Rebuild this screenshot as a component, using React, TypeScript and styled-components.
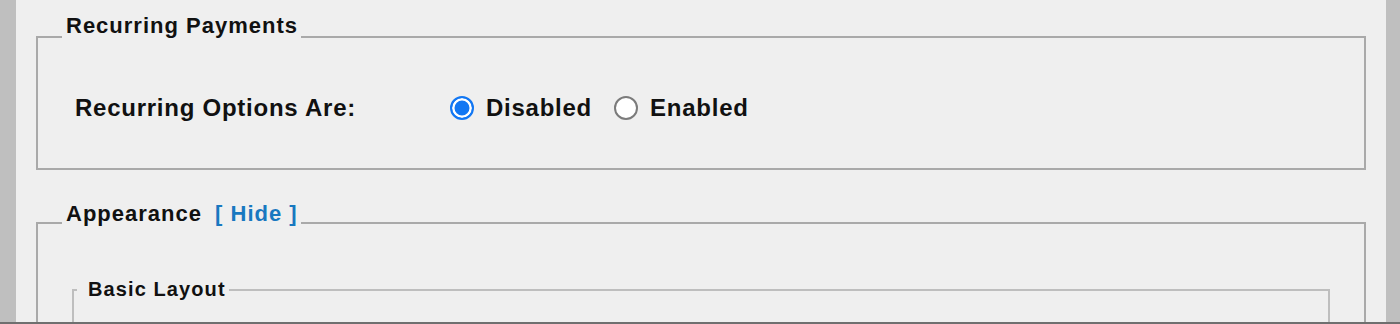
import React, { useState } from "react";
import styled, { createGlobalStyle } from "styled-components";

const GlobalStyle = createGlobalStyle`
  html, body { margin: 0; padding: 0; background: #efefef; }
  body { font-family: "Liberation Sans", Arial, Helvetica, sans-serif; color: #111; }
`;

const Frame = styled.div`
  display: flex;
  height: 324px;
  box-sizing: border-box;
  border-bottom: 2px solid #6f6f6f;
  overflow: hidden;
  background: #efefef;
`;

const Strip = styled.div<{ $w: number }>`
  flex: 0 0 ${(p) => p.$w}px;
  background: #bfbfbf;
`;

const Main = styled.main`
  flex: 1;
  min-width: 0;
  padding: 13px 20px 0;
  display: flex;
  flex-direction: column;
  gap: 31px;
`;

const Fieldset = styled.fieldset<{ $inner?: boolean }>`
  margin: ${(p) => (p.$inner ? "0 10px" : "0")};
  padding: 0 ${(p) => (p.$inner ? "3px" : "24px")};
  border: 2px solid ${(p) => (p.$inner ? "#bebebe" : "#a9a9a9")};
  min-width: 0;
`;

const Legend = styled.legend<{ $size: number; $pb: number; $pl: number; $ls: number }>`
  font-size: ${(p) => p.$size}px;
  line-height: ${(p) => p.$size + 3}px;
  font-weight: 700;
  letter-spacing: ${(p) => p.$ls}px;
  padding: 0 3px ${(p) => p.$pb}px ${(p) => p.$pl}px;
  color: #111;
`;

const ToggleLink = styled.a`
  color: #1878c0;
  margin-left: 6px;
  text-decoration: none;
  cursor: pointer;
`;

const Row = styled.div`
  display: grid;
  grid-template-columns: 375px auto;
  align-items: center;
  padding: 33px 0 46px 13px;
`;

const RowLabel = styled.span`
  font-size: 24px;
  line-height: 28px;
  font-weight: 700;
  letter-spacing: 0.75px;
`;

const Options = styled.div`
  display: flex;
  align-items: center;
  gap: 22px;
`;

const Option = styled.label`
  display: flex;
  align-items: center;
  gap: 12px;
  font-size: 24px;
  line-height: 28px;
  font-weight: 700;
  letter-spacing: 0.75px;
  cursor: pointer;
`;

const Radio = styled.input.attrs({ type: "radio" })`
  appearance: none;
  margin: 0;
  width: 24px;
  height: 24px;
  border-radius: 50%;
  box-sizing: border-box;
  border: 2px solid #7b7b7b;
  background: #fff;
  &:checked {
    border-color: #1277f3;
    background: #1277f3;
    box-shadow: inset 0 0 0 2.5px #fff;
  }
`;

const InnerBody = styled.div`
  height: 120px;
`;

const Section2Body = styled.div`
  padding-top: 34px;
`;

export default function App() {
  const [recurring, setRecurring] = useState("disabled");
  return (
    <>
      <GlobalStyle />
      <Frame>
        <Strip $w={16} />
        <Main>
          <Fieldset>
            <Legend $size={22} $pb={23} $pl={4} $ls={1}>Recurring Payments</Legend>
            <Row>
              <RowLabel>Recurring Options Are:</RowLabel>
              <Options>
                <Option>
                  <Radio
                    name="recurring"
                    checked={recurring === "disabled"}
                    onChange={() => setRecurring("disabled")}
                  />
                  Disabled
                </Option>
                <Option>
                  <Radio
                    name="recurring"
                    checked={recurring === "enabled"}
                    onChange={() => setRecurring("enabled")}
                  />
                  Enabled
                </Option>
              </Options>
            </Row>
          </Fieldset>
          <Fieldset>
            <Legend $size={22} $pb={18} $pl={4} $ls={1}>
              Appearance <ToggleLink>[ Hide ]</ToggleLink>
            </Legend>
            <Section2Body>
              <Fieldset $inner>
                <Legend $size={20} $pb={1} $pl={11} $ls={1.1}>Basic Layout</Legend>
                <InnerBody />
              </Fieldset>
            </Section2Body>
          </Fieldset>
        </Main>
        <Strip $w={14} />
      </Frame>
    </>
  );
}
